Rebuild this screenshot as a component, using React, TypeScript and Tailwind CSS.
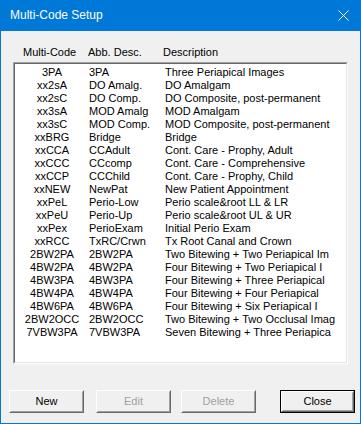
import React from 'react'

const rows: [string, string, string][] = [
  ['3PA', '3PA', 'Three Periapical Images'],
  ['xx2sA', 'DO Amalg.', 'DO Amalgam'],
  ['xx2sC', 'DO Comp.', 'DO Composite, post-permanent'],
  ['xx3sA', 'MOD Amalg', 'MOD Amalgam'],
  ['xx3sC', 'MOD Comp.', 'MOD Composite, post-permanent'],
  ['xxBRG', 'Bridge', 'Bridge'],
  ['xxCCA', 'CCAdult', 'Cont. Care - Prophy, Adult'],
  ['xxCCC', 'CCcomp', 'Cont. Care - Comprehensive'],
  ['xxCCP', 'CCChild', 'Cont. Care - Prophy, Child'],
  ['xxNEW', 'NewPat', 'New Patient Appointment'],
  ['xxPeL', 'Perio-Low', 'Perio scale&root LL & LR'],
  ['xxPeU', 'Perio-Up', 'Perio scale&root UL & UR'],
  ['xxPex', 'PerioExam', 'Initial Perio Exam'],
  ['xxRCC', 'TxRC/Crwn', 'Tx Root Canal and Crown'],
  ['2BW2PA', '2BW2PA', 'Two Bitewing + Two Periapical Im'],
  ['4BW2PA', '4BW2PA', 'Four Bitewing + Two Periapical I'],
  ['4BW3PA', '4BW3PA', 'Four Bitewing + Three Periapical'],
  ['4BW4PA', '4BW4PA', 'Four Bitewing + Four Periapical'],
  ['4BW6PA', '4BW6PA', 'Four Bitewing + Six Periapical I'],
  ['2BW2OCC', '2BW2OCC', 'Two Bitewing + Two Occlusal Imag'],
  ['7VBW3PA', '7VBW3PA', 'Seven Bitewing + Three Periapica'],
]

// classic 3D push button
function Button({ label, disabled, isDefault, className }: { label: string; disabled?: boolean; isDefault?: boolean; className?: string }) {
  const inner = (
    <div className="w-full h-full border border-t-white border-l-white border-r-[#696969] border-b-[#696969]">
      <div className="w-full h-full border border-t-[#f0f0f0] border-l-[#f0f0f0] border-r-[#a0a0a0] border-b-[#a0a0a0] flex items-center justify-center">
        <span className={disabled ? 'text-[#a0a0a0]' : 'text-black'}>{label}</span>
      </div>
    </div>
  )
  return (
    <div className={`w-[75px] h-[23px] bg-[#f0f0f0] ${isDefault ? 'border border-black' : ''} ${className ?? ''}`}>
      {inner}
    </div>
  )
}

export default function App() {
  return (
    <div
      className="w-[361px] h-[424px] bg-[#0078d7] flex flex-col px-px pb-px text-[11px] leading-[13px] text-black"
      style={{ fontFamily: '"Liberation Sans", Arial, sans-serif' }}
    >
      {/* Title bar */}
      <div className="h-[31px] flex items-center justify-between pl-[9px] pr-[11px] text-white">
        <span className="text-[12px]">Multi-Code Setup</span>
        <svg width="11" height="11" viewBox="0 0 11 11" className="mt-[-1px]">
          <path d="M0.5 0.5 L10.5 10.5 M10.5 0.5 L0.5 10.5" stroke="white" strokeWidth="1" />
        </svg>
      </div>

      {/* Body */}
      <div className="flex-1 bg-[#f0f0f0] flex flex-col pt-[15px]">
        <div className="flex h-[13px] whitespace-nowrap">
          <span className="ml-[22px] w-[65px]">Multi-Code</span>
          <span className="w-[75px]">Abb. Desc.</span>
          <span>Description</span>
        </div>

        {/* List */}
        <div className="mt-[3px] ml-[12px] w-[335px] h-[302px] border border-t-[#a0a0a0] border-l-[#a0a0a0] border-r-white border-b-white">
          <div className="w-full h-full border border-t-[#696969] border-l-[#696969] border-r-[#e3e3e3] border-b-[#e3e3e3] bg-white pt-[2px] overflow-hidden">
            {rows.map(([code, abb, desc]) => (
              <div key={code} className="flex h-[13px] whitespace-nowrap">
                <span className="w-[74px] text-center">{code}</span>
                <span className="w-[76px]">{abb}</span>
                <span>{desc}</span>
              </div>
            ))}
          </div>
        </div>

        {/* Buttons */}
        <div className="flex mt-[26px]">
          <Button label="New" className="ml-[8px]" />
          <Button label="Edit" disabled className="ml-[12px]" />
          <Button label="Delete" disabled className="ml-[10px]" />
          <Button label="Close" isDefault className="ml-[24px]" />
        </div>
      </div>
    </div>
  )
}
